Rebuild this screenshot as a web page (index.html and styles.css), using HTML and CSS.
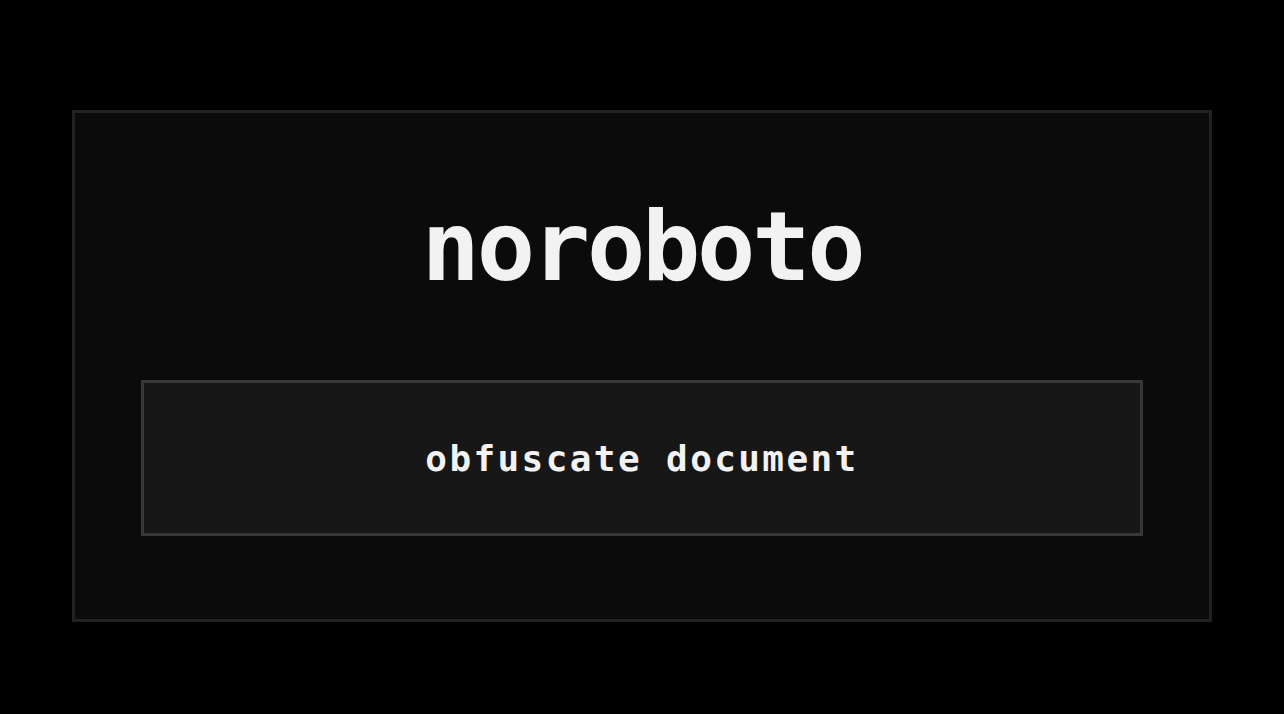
FILE: index.html
```html
<!DOCTYPE html>
<html>
<head>
<meta charset="utf-8">
<link rel="stylesheet" href="styles.css">
</head>
<body>
<main class="page">
  <section class="panel">
    <h1 class="title">noroboto</h1>
    <button class="action" type="button">obfuscate document</button>
  </section>
</main>
</body>
</html>
```
FILE: styles.css
```css
html, body {
  margin: 0;
  padding: 0;
  background: #000;
}
body {
  font-family: "DejaVu Sans Mono", "Liberation Mono", monospace;
  color: #f2f2f2;
}
.page {
  display: flex;
  justify-content: center;
  padding-top: 110px;
}
.panel {
  box-sizing: border-box;
  width: 1140px;
  height: 512px;
  background: #0b0b0b;
  border: 3px solid #222;
  padding: 76px 66px 0;
  display: flex;
  flex-direction: column;
  align-items: stretch;
}
.title {
  margin: 0 0 76px;
  text-align: center;
  font-size: 97px;
  font-weight: bold;
  line-height: 115px;
  letter-spacing: -3.3px;
  color: #f2f2f2;
}
.action {
  box-sizing: border-box;
  height: 156px;
  background: #171717;
  border: 3px solid #383838;
  color: #f2f2f2;
  font-family: "DejaVu Sans Mono", "Liberation Mono", monospace;
  font-weight: bold;
  font-size: 36px;
  letter-spacing: 2.4px;
  padding: 0 0 0 0;
  cursor: pointer;
}
```
